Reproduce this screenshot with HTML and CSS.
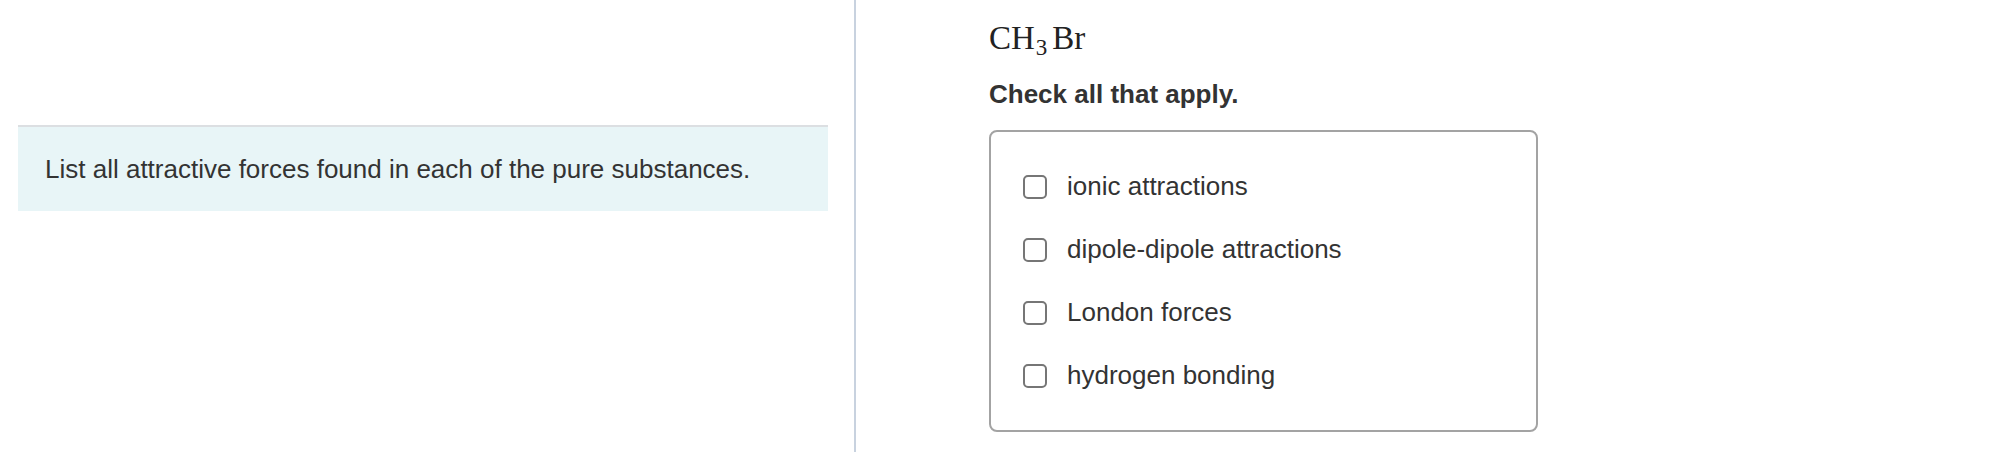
FILE: index.html
```html
<!DOCTYPE html>
<html>
<head>
<meta charset="utf-8">
<link rel="stylesheet" href="styles.css">
</head>
<body>
<div class="page">
  <div class="left">
    <div class="prompt">List all attractive forces found in each of the pure substances.</div>
  </div>
  <div class="right">
    <div class="formula">CH<span class="sub">3</span><span class="br">Br</span></div>
    <div class="instr">Check all that apply.</div>
    <div class="options">
      <label class="opt"><span class="cb"></span><span class="lbl">ionic attractions</span></label>
      <label class="opt"><span class="cb"></span><span class="lbl">dipole-dipole attractions</span></label>
      <label class="opt"><span class="cb"></span><span class="lbl">London forces</span></label>
      <label class="opt"><span class="cb"></span><span class="lbl">hydrogen bonding</span></label>
    </div>
  </div>
</div>
</body>
</html>
```
FILE: styles.css
```css
html, body {
  margin: 0;
  padding: 0;
  background: #fff;
}
body {
  font-family: "Liberation Sans", Arial, sans-serif;
  color: #333;
}
.page {
  display: flex;
  height: 452px;
}
.left {
  width: 854px;
  flex: none;
  padding: 125px 26px 0 18px;
  box-sizing: border-box;
}
.prompt {
  background: #e8f5f7;
  border-top: 2px solid #dcdfe2;
  height: 84px;
  box-sizing: content-box;
  display: flex;
  align-items: center;
  padding-left: 27px;
  font-size: 26px;
  color: #333;
}
.right {
  border-left: 2px solid #c8d2df;
  padding-left: 133px;
  flex: 1;
}
.formula {
  margin-top: 20px;
  font-family: "Liberation Serif", "Times New Roman", serif;
  font-size: 33px;
  line-height: 37px;
  color: #222;
}
.sub {
  font-size: 23px;
  position: relative;
  top: 6px;
  margin-left: 1px;
}
.br {
  margin-left: 5px;
}
.instr {
  margin-top: 19px;
  font-weight: bold;
  font-size: 26px;
  line-height: 30px;
  color: #333;
}
.options {
  margin-top: 21px;
  width: 549px;
  height: 302px;
  box-sizing: border-box;
  border: 2px solid #a3a3a3;
  border-radius: 8px;
  padding: 23px 0 23px 32px;
  display: flex;
  flex-direction: column;
}
.opt {
  display: flex;
  align-items: center;
  height: 63px;
}
.cb {
  width: 24px;
  height: 24px;
  box-sizing: border-box;
  border: 2px solid #767676;
  border-radius: 5px;
  flex: none;
  margin-right: 20px;
}
.lbl {
  font-size: 26px;
  color: #333;
}
```
